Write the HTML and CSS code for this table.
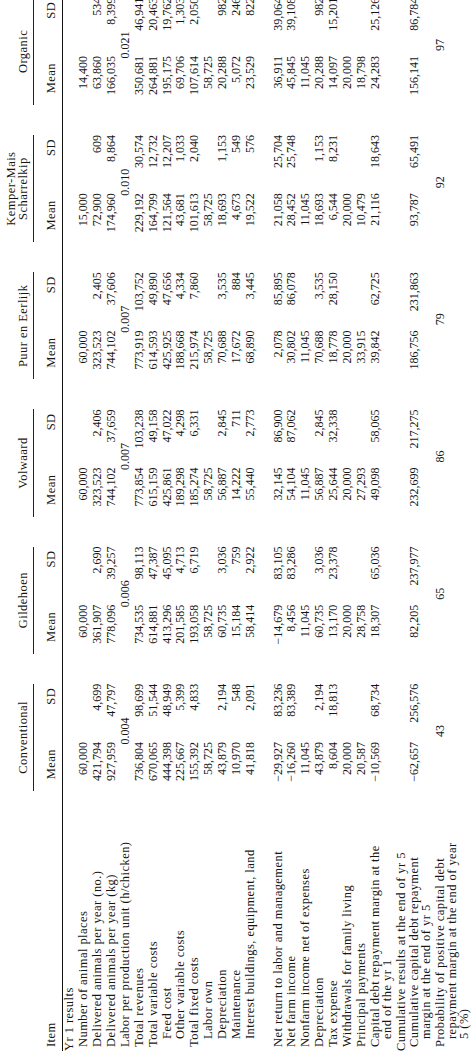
FILE: index.html
```html
<!DOCTYPE html>
<html lang="en">
<head>
<meta charset="utf-8">
<title>Results table</title>
<link rel="stylesheet" href="styles.css">
</head>
<body>
<div class="viewport">
<div class="page">
<table class="tbl">
<colgroup>
<col class="c-item">
<col class="c-mean"><col class="c-sd">
<col class="c-mean"><col class="c-sd">
<col class="c-mean"><col class="c-sd">
<col class="c-mean"><col class="c-sd">
<col class="c-mean"><col class="c-sd">
<col class="c-mean"><col class="c-sd">
</colgroup>
<thead>
<tr class="r-grp">
<th></th>
<th colspan="2"><div class="grp-in">Conventional</div></th>
<th colspan="2"><div class="grp-in">Gildehoen</div></th>
<th colspan="2"><div class="grp-in">Volwaard</div></th>
<th colspan="2"><div class="grp-in">Puur en Eerlijk</div></th>
<th colspan="2"><div class="grp-in">Kemper-Mais<br>Scharrelkip</div></th>
<th colspan="2"><div class="grp-in">Organic</div></th>
</tr>
<tr class="r-sub">
<th class="item-h">Item</th>
<th class="h-mean">Mean</th><th class="h-sd">SD</th>
<th class="h-mean">Mean</th><th class="h-sd">SD</th>
<th class="h-mean">Mean</th><th class="h-sd">SD</th>
<th class="h-mean">Mean</th><th class="h-sd">SD</th>
<th class="h-mean">Mean</th><th class="h-sd">SD</th>
<th class="h-mean">Mean</th><th class="h-sd">SD</th>
</tr>
</thead>
<tbody>
<tr><td class="lab l0">Yr 1 results</td><td colspan="12"></td></tr>
<tr><td class="lab l1">Number of animal places</td><td>60,000</td><td></td><td>60,000</td><td></td><td>60,000</td><td></td><td>60,000</td><td></td><td>15,000</td><td></td><td>14,400</td><td></td></tr>
<tr><td class="lab l1">Delivered animals per year (no.)</td><td>421,794</td><td>4,699</td><td>361,907</td><td>2,690</td><td>323,523</td><td>2,406</td><td>323,523</td><td>2,405</td><td>72,900</td><td>609</td><td>63,860</td><td>534</td></tr>
<tr><td class="lab l1">Delivered animals per year (kg)</td><td>927,959</td><td>47,797</td><td>778,096</td><td>39,257</td><td>744,102</td><td>37,659</td><td>744,102</td><td>37,606</td><td>174,960</td><td>8,864</td><td>166,035</td><td>8,399</td></tr>
<tr><td class="lab l1">Labor per production unit (h/chicken)</td><td colspan="2" class="mid">0.004</td><td colspan="2" class="mid">0.006</td><td colspan="2" class="mid">0.007</td><td colspan="2" class="mid">0.007</td><td colspan="2" class="mid">0.010</td><td colspan="2" class="mid">0.021</td></tr>
<tr><td class="lab l1">Total revenues</td><td>736,804</td><td>98,699</td><td>734,535</td><td>98,113</td><td>773,854</td><td>103,238</td><td>773,919</td><td>103,752</td><td>229,192</td><td>30,574</td><td>350,681</td><td>46,941</td></tr>
<tr><td class="lab l1">Total variable costs</td><td>670,065</td><td>51,544</td><td>614,881</td><td>47,387</td><td>615,159</td><td>49,158</td><td>614,593</td><td>49,890</td><td>164,799</td><td>12,732</td><td>264,881</td><td>20,463</td></tr>
<tr><td class="lab l2">Feed cost</td><td>444,398</td><td>48,949</td><td>413,296</td><td>45,095</td><td>425,861</td><td>47,022</td><td>425,925</td><td>47,656</td><td>121,564</td><td>12,207</td><td>195,175</td><td>19,762</td></tr>
<tr><td class="lab l2">Other variable costs</td><td>225,667</td><td>5,399</td><td>201,585</td><td>4,713</td><td>189,298</td><td>4,298</td><td>188,668</td><td>4,334</td><td>43,681</td><td>1,033</td><td>69,706</td><td>1,303</td></tr>
<tr><td class="lab l1">Total fixed costs</td><td>155,392</td><td>4,833</td><td>193,058</td><td>6,719</td><td>185,274</td><td>6,331</td><td>215,974</td><td>7,860</td><td>101,613</td><td>2,040</td><td>107,614</td><td>2,050</td></tr>
<tr><td class="lab l2">Labor own</td><td>58,725</td><td></td><td>58,725</td><td></td><td>58,725</td><td></td><td>58,725</td><td></td><td>58,725</td><td></td><td>58,725</td><td></td></tr>
<tr><td class="lab l2">Depreciation</td><td>43,879</td><td>2,194</td><td>60,735</td><td>3,036</td><td>56,887</td><td>2,845</td><td>70,688</td><td>3,535</td><td>18,693</td><td>1,153</td><td>20,288</td><td>982</td></tr>
<tr><td class="lab l2">Maintenance</td><td>10,970</td><td>548</td><td>15,184</td><td>759</td><td>14,222</td><td>711</td><td>17,672</td><td>884</td><td>4,673</td><td>549</td><td>5,072</td><td>246</td></tr>
<tr><td class="lab l2">Interest buildings, equipment, land</td><td>41,818</td><td>2,091</td><td>58,414</td><td>2,922</td><td>55,440</td><td>2,773</td><td>68,890</td><td>3,445</td><td>19,522</td><td>576</td><td>23,529</td><td>822</td></tr>
<tr class="gap"><td colspan="13">&nbsp;</td></tr>
<tr><td class="lab l1">Net return to labor and management</td><td>&minus;29,927</td><td>83,236</td><td>&minus;14,679</td><td>83,105</td><td>32,145</td><td>86,900</td><td>2,078</td><td>85,895</td><td>21,058</td><td>25,704</td><td>36,911</td><td>39,064</td></tr>
<tr><td class="lab l1">Net farm income</td><td>&minus;16,260</td><td>83,389</td><td>8,456</td><td>83,286</td><td>54,104</td><td>87,062</td><td>30,802</td><td>86,078</td><td>28,452</td><td>25,748</td><td>45,845</td><td>39,108</td></tr>
<tr><td class="lab l1">Nonfarm income net of expenses</td><td>11,045</td><td></td><td>11,045</td><td></td><td>11,045</td><td></td><td>11,045</td><td></td><td>11,045</td><td></td><td>11,045</td><td></td></tr>
<tr><td class="lab l1">Depreciation</td><td>43,879</td><td>2,194</td><td>60,735</td><td>3,036</td><td>56,887</td><td>2,845</td><td>70,688</td><td>3,535</td><td>18,693</td><td>1,153</td><td>20,288</td><td>982</td></tr>
<tr><td class="lab l1">Tax expense</td><td>8,604</td><td>18,813</td><td>13,170</td><td>23,378</td><td>25,644</td><td>32,338</td><td>18,778</td><td>28,150</td><td>6,544</td><td>8,231</td><td>14,097</td><td>15,201</td></tr>
<tr><td class="lab l1">Withdrawals for family living</td><td>20,000</td><td></td><td>20,000</td><td></td><td>20,000</td><td></td><td>20,000</td><td></td><td>20,000</td><td></td><td>20,000</td><td></td></tr>
<tr><td class="lab l1">Principal payments</td><td>20,587</td><td></td><td>28,758</td><td></td><td>27,293</td><td></td><td>33,915</td><td></td><td>10,479</td><td></td><td>18,798</td><td></td></tr>
<tr><td class="lab l1 hang">Capital debt repayment margin at the<br>end of the yr 1</td><td>&minus;10,569</td><td>68,734</td><td>18,307</td><td>65,036</td><td>49,098</td><td>58,065</td><td>39,842</td><td>62,725</td><td>21,116</td><td>18,643</td><td>24,283</td><td>25,126</td></tr>
<tr><td class="lab l0">Cumulative results at the end of yr 5</td><td colspan="12"></td></tr>
<tr><td class="lab l1 hang">Cumulative capital debt repayment<br>margin at the end of yr 5</td><td>&minus;62,657</td><td>256,576</td><td>82,205</td><td>237,977</td><td>232,699</td><td>217,275</td><td>186,756</td><td>231,863</td><td>93,787</td><td>65,491</td><td>156,141</td><td>86,784</td></tr>
<tr><td class="lab l1 hang">Probability of positive capital debt<br>repayment margin at the end of year<br>5 (%)</td><td colspan="2" class="mid">43</td><td colspan="2" class="mid">65</td><td colspan="2" class="mid">86</td><td colspan="2" class="mid">79</td><td colspan="2" class="mid">92</td><td colspan="2" class="mid">97</td></tr>
</tbody>
</table>
</div>
</div>
</body>
</html>
```

FILE: styles.css
```css
html, body {
  margin: 0;
  padding: 0;
  background: #ffffff;
  overflow: hidden;
}

.viewport {
  width: 474px;
  height: 1051px;
  overflow: hidden;
}

/* The table is printed sideways: it is laid out normally and then
   turned a quarter turn counter-clockwise. */
.page {
  width: 1060px;
  height: 474px;
  transform-origin: 0 0;
  transform: translateY(1051px) rotate(-90deg);
}

.tbl {
  table-layout: fixed;
  width: 1053.2px;
  border-collapse: separate;
  border-spacing: 0;
  font-family: "Liberation Serif", "Times New Roman", serif;
  font-size: 12px;
  color: #151515;
}

.c-item { width: 230px; }
.c-mean { width: 79px; }
.c-sd { width: 58.2px; }

.tbl th,
.tbl td {
  padding: 0;
  font-weight: normal;
  white-space: nowrap;
}

.r-grp th {
  vertical-align: bottom;
}

.grp-in {
  margin-left: 30px;
  padding: 5px 0 4px;
  border-bottom: 1px solid #222;
  line-height: 12px;
  text-align: center;
  font-size: 12.5px;
  letter-spacing: 0.45px;
}

.r-sub th {
  padding: 11px 0 4.5px;
  line-height: 12px;
  border-bottom: 1.5px solid #111;
  text-align: right;
  font-size: 12.5px;
  letter-spacing: 0.45px;
}

.r-sub th.h-mean { padding-right: 7px; }
.r-sub th.h-sd { padding-right: 4px; }

.r-sub th.item-h {
  text-align: left;
  padding-left: 4px;
}

.tbl td {
  padding: 0.95px 0;
  line-height: 12px;
  vertical-align: top;
  text-align: right;
}

.tbl td.lab {
  text-align: left;
  font-size: 12.5px;
  letter-spacing: 0.45px;
}

.tbl td.l0 { padding-left: 0; }
.tbl td.l1 { padding-left: 4px; }
.tbl td.l2 { padding-left: 12px; }
.tbl td.hang { padding-left: 12px; text-indent: -8px; }

.tbl td.mid {
  text-align: center;
  padding-left: 43px;
}
```
